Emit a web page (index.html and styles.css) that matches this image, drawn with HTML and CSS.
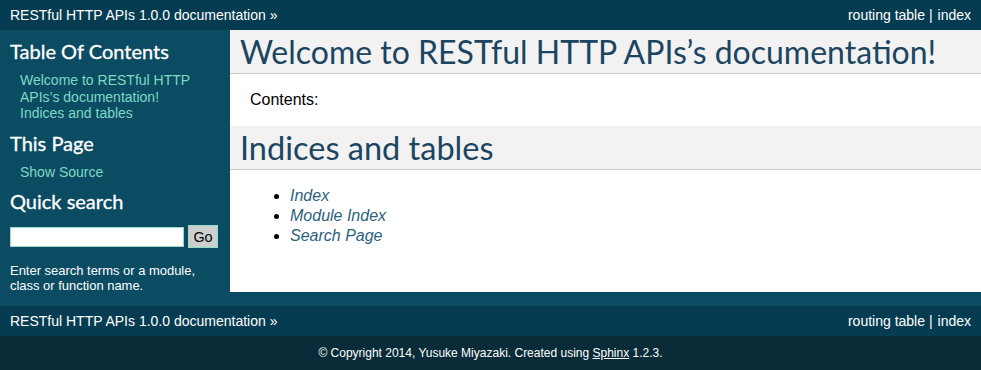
FILE: index.html
```html
<!DOCTYPE html>
<html>
<head>
<meta charset="utf-8">
<title>Welcome to RESTful HTTP APIs’s documentation!</title>
<link rel="stylesheet" href="styles.css">
</head>
<body>
<div class="related">
  <ul>
    <li class="right last"><a href="#">index</a></li>
    <li class="right"><a href="#">routing table</a> |</li>
    <li><a href="#">RESTful HTTP APIs 1.0.0 documentation</a> »</li>
  </ul>
</div>
<div class="document">
  <div class="sphinxsidebar">
    <h3>Table Of Contents</h3>
    <ul>
      <li><a href="#">Welcome to RESTful HTTP APIs’s documentation!</a></li>
      <li><a href="#">Indices and tables</a></li>
    </ul>
    <h3>This Page</h3>
    <ul>
      <li><a href="#">Show Source</a></li>
    </ul>
    <h3>Quick search</h3>
    <form class="search">
      <input class="q" type="text">
      <input class="go" type="submit" value="Go">
    </form>
    <p class="searchtip">Enter search terms or a module, class or function name.</p>
  </div>
  <div class="bodywrapper">
    <div class="body">
      <h1>Welcome to RESTful HTTP APIs’s documentation!</h1>
      <p class="contents">Contents:</p>
      <h2>Indices and tables</h2>
      <ul class="indices">
        <li><a href="#"><em>Index</em></a></li>
        <li><a href="#"><em>Module Index</em></a></li>
        <li><a href="#"><em>Search Page</em></a></li>
      </ul>
    </div>
  </div>
</div>
<div class="related">
  <ul>
    <li class="right last"><a href="#">index</a></li>
    <li class="right"><a href="#">routing table</a> |</li>
    <li><a href="#">RESTful HTTP APIs 1.0.0 documentation</a> »</li>
  </ul>
</div>
<div class="footer">© Copyright 2014, Yusuke Miyazaki. Created using <a href="#">Sphinx</a> 1.2.3.</div>
</body>
</html>
```
FILE: styles.css
```css
html, body {
  margin: 0;
  padding: 0;
}
body {
  font-family: "Liberation Sans", Arial, sans-serif;
  font-size: 16px;
  background: #0b4c63;
  color: #000;
}
a { text-decoration: none; }

.related {
  background: #063c51;
  color: #fff;
  line-height: 30px;
  height: 30px;
  font-size: 14px;
}
.related ul {
  margin: 0;
  padding: 0 0 0 10px;
  list-style: none;
}
.related li { display: inline; }
.related li.right { float: right; margin-right: 5px; }
.related li.right.last { margin-right: 10px; }
.related a { color: #fff; }

.document {
  display: flex;
  align-items: flex-start;
  background: #0b4c63;
}
.sphinxsidebar {
  width: 230px;
  flex: none;
  box-sizing: border-box;
  padding: 10px 5px 0 10px;
  font-size: 14px;
  color: #fff;
}
.sphinxsidebar h3 {
  font-family: Lato, "Open Sans", sans-serif;
  font-weight: normal;
  font-size: 20px;
  line-height: 22px;
  margin: 0;
  padding: 0;
  color: #fff;
  -webkit-text-stroke: 0.3px #fff;
}
.sphinxsidebar ul {
  list-style: none;
  margin: 10px;
  padding: 0;
  line-height: 16.6px;
}
.sphinxsidebar a { color: #7fd8c4; }
.search {
  margin: 13px 0 0 0;
  display: flex;
  gap: 4px;
  align-items: center;
}
.search .q {
  width: 174px;
  height: 20px;
  box-sizing: border-box;
  border: 1px solid #98dbcc;
  background: #fff;
  margin: 0;
  padding: 0 2px;
  font-size: 14px;
}
.search .go {
  width: 30px;
  height: 23px;
  box-sizing: border-box;
  border: 1px solid #98dbcc;
  background: #cfcfcf;
  margin: 0;
  padding: 0;
  font-family: "Liberation Sans", Arial, sans-serif;
  font-size: 14.4px;
  color: #000;
}
.searchtip {
  font-size: 12.96px;
  line-height: 15px;
  margin: 15px 0 12.5px 0;
  color: #fff;
}

.bodywrapper {
  flex: 1;
  background: #fff;
}
.body {
  padding: 0 20px 30px 20px;
}
.body h1, .body h2 {
  font-family: Lato, "Open Sans", sans-serif;
  font-weight: normal;
  color: #1b4560;
  background: #f2f2f2;
  border-bottom: 1px solid #ccc;
  margin: 15px -20px 10px -20px;
  padding: 3px 0 3px 10px;
  font-size: 32px;
  line-height: 37px;
}
.body h2 { font-size: 32.5px; }
.body h1 { margin-top: 0; }
.body p.contents {
  margin: 16px 0 15px 0;
  line-height: 20.8px;
}
.indices {
  margin: 16px 0 16px 0;
  padding-left: 40px;
  line-height: 20px;
}
.indices a { color: #2b5f80; }

.footer {
  background: #0a2c39;
  color: #fff;
  text-align: center;
  font-size: 12px;
  line-height: 16px;
  padding: 9px 0;
}
.footer a { color: #fff; text-decoration: underline; }
```
